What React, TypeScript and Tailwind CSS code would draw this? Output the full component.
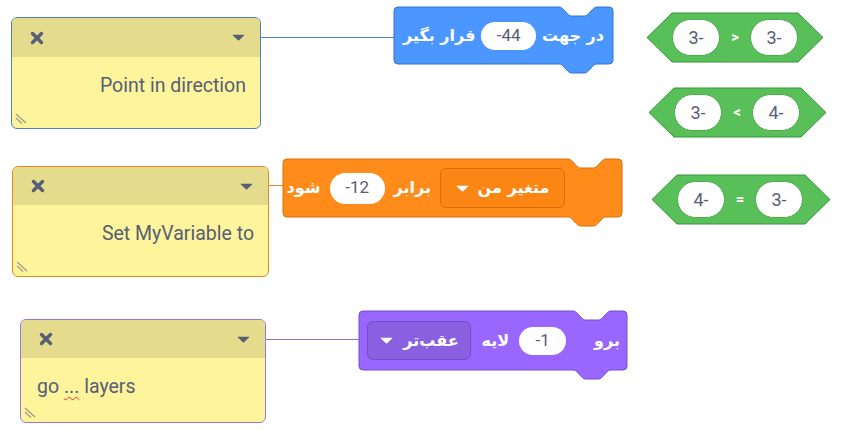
import React from 'react'

const TEXT = 'text-[#575e75]'
const FA = "font-['DejaVu_Sans',sans-serif]"
const RB = "font-['Roboto',sans-serif]"

function notch(sx: number, sy: number, dir: number) {
  const p = (x: number, y: number) => `${(x * sx * dir).toFixed(2)},${(y * sy).toFixed(2)}`
  return (
    `c ${p(2, 0)} ${p(3, 1)} ${p(4, 2)} l ${p(4, 4)} c ${p(1, 1)} ${p(2, 2)} ${p(4, 2)} ` +
    `h ${(12 * sx * dir).toFixed(2)} c ${p(2, 0)} ${p(3, -1)} ${p(4, -2)} l ${p(4, -4)} c ${p(1, -1)} ${p(2, -2)} ${p(4, -2)}`
  )
}

function blockPath(w: number, h: number, fromRight: number) {
  const nw = 38
  const depth = 9
  const sx = nw / 36
  const sy = depth / 8
  const ns = w - fromRight - nw
  const ne = w - fromRight
  return (
    `M 0,4 A 4,4 0 0 1 4,0 H ${ns} ${notch(sx, sy, 1)} H ${w - 4} A 4,4 0 0 1 ${w},4 ` +
    `V ${h - 4} A 4,4 0 0 1 ${w - 4},${h} H ${ne} ${notch(sx, sy, -1)} H 4 A 4,4 0 0 1 0,${h - 4} Z`
  )
}

function BlockShape({ w, h, fill, stroke }: { w: number; h: number; fill: string; stroke: string }) {
  return (
    <svg className="absolute left-0 top-0 overflow-visible" width={w} height={h + 10}>
      <path d={blockPath(w, h, 16)} fill={fill} stroke={stroke} strokeWidth={1} />
    </svg>
  )
}

function Oval({ value, className = '' }: { value: string; className?: string }) {
  return (
    <div
      dir="ltr"
      className={`flex items-center justify-center rounded-full bg-white text-[17px] [unicode-bidi:isolate] ${RB} ${TEXT} ${className}`}
    >
      {value}
    </div>
  )
}

function Caret({ color = '#575e75', w = 13, h = 7 }: { color?: string; w?: number; h?: number }) {
  return (
    <svg width={w} height={h} viewBox="0 0 13 7">
      <path d="M1 0.8 H12 Q12.6 0.8 12.1 1.4 L7.1 6.2 Q6.5 6.8 5.9 6.2 L0.9 1.4 Q0.4 0.8 1 0.8 Z" fill={color} />
    </svg>
  )
}

function CloseX() {
  return (
    <svg width="14" height="14" viewBox="0 0 14 14">
      <path d="M2.5 2.5 L11.5 11.5 M11.5 2.5 L2.5 11.5" stroke="#575e75" strokeWidth="3.4" strokeLinecap="round" />
    </svg>
  )
}

function Note({
  pos,
  border,
  headerH,
  children,
  align,
}: {
  pos: string
  border: string
  headerH: string
  children: React.ReactNode
  align: 'left' | 'right'
}) {
  return (
    <div className={`absolute flex flex-col overflow-hidden rounded-[6px] border bg-[#fef49c] ${pos} ${border}`}>
      <div className={`flex shrink-0 items-center justify-between bg-[#e4db8c] pl-[18px] pr-[15px] ${headerH}`}>
        <CloseX />
        <Caret />
      </div>
      <div
        className={`relative flex-1 pt-[17px] text-[19.5px] leading-[24px] ${RB} ${TEXT} ${
          align === 'right' ? 'pr-[14px] text-right' : 'pl-[16px] text-left'
        }`}
      >
        {children}
        <svg className="absolute bottom-[3px] left-[3px]" width="14" height="12" viewBox="0 0 14 12">
          <path d="M1 1 L11 10 M1 5 L7 10.5" stroke="#9a9a8a" strokeWidth="1.2" />
        </svg>
      </div>
    </div>
  )
}

function Hex({ pos, w, left, op, right }: { pos: string; w: number; left: string; op: string; right: string }) {
  const h = 49
  const d = 25
  return (
    <div className={`absolute h-[49px] ${pos}`} style={{ width: w }}>
      <svg className="absolute left-0 top-0 overflow-visible" width={w} height={h}>
        <polygon
          points={`0,${h / 2} ${d},0 ${w - d},0 ${w},${h / 2} ${w - d},${h} ${d},${h}`}
          fill="#59c059"
          stroke="#389438"
          strokeWidth={1}
          strokeLinejoin="round"
        />
      </svg>
      <div dir="ltr" className="relative flex h-full items-center pl-[25px]">
        <Oval value={left} className="h-[37px] w-[48px] border border-[#4ea94e] text-[18px]" />
        <div className={`w-[30px] text-center text-[15px] font-bold text-white ${RB}`}>{op}</div>
        <Oval value={right} className="h-[37px] w-[48px] border border-[#4ea94e] text-[18px]" />
      </div>
    </div>
  )
}

function Label({ children }: { children: React.ReactNode }) {
  return <span className={`whitespace-nowrap text-[16px] font-bold text-white ${FA}`}>{children}</span>
}

export default function App() {
  return (
    <div className="relative h-[430px] w-[844px] overflow-hidden bg-white">
      {/* connector lines */}
      <div className="absolute left-[260px] top-[37px] h-px w-[135px] bg-[#4c7fc4]" />
      <div className="absolute left-[268px] top-[185px] h-px w-[16px] bg-[#e08a24]" />
      <div className="absolute left-[265px] top-[339px] h-px w-[95px] bg-[#8f6fd6]" />

      <Note
        pos="left-[11px] top-[17px] h-[112px] w-[250px]"
        border="border-[#4c7fc4]"
        headerH="h-[39px]"
        align="right"
      >
        Point in direction
      </Note>

      <Note
        pos="left-[12px] top-[166px] h-[111px] w-[257px]"
        border="border-[#e08a24]"
        headerH="h-[38px]"
        align="right"
      >
        Set MyVariable to
      </Note>

      <Note
        pos="left-[20px] top-[319px] h-[104px] w-[246px]"
        border="border-[#9a76d6]"
        headerH="h-[38px]"
        align="left"
      >
        go <span className="underline decoration-red-500 decoration-wavy decoration-1 underline-offset-[3px]">...</span>{' '}
        layers
      </Note>

      {/* motion: point in direction */}
      <div className="absolute left-[394px] top-[7px] h-[57px] w-[219px]">
        <BlockShape w={219} h={57} fill="#4c97ff" stroke="#3373cc" />
        <div dir="rtl" className="relative flex h-full items-center justify-between px-[9px]">
          <Label>در جهت</Label>
          <Oval value="-44" className="h-[28px] w-[55px]" />
          <Label>قرار بگیر</Label>
        </div>
      </div>

      {/* variables: set to */}
      <div className="absolute left-[283px] top-[159px] h-[58px] w-[339px]">
        <BlockShape w={339} h={58} fill="#ff8c1a" stroke="#db6e00" />
        <div dir="rtl" className="relative flex h-full items-center gap-[9px] pr-[57px]">
          <div className="flex h-[40px] w-[125px] items-center justify-center gap-[9px] rounded-[6px] border border-[#db6e00] bg-[#fb8614]">
            <Label>متغیر من</Label>
            <Caret color="#ffffff" />
          </div>
          <Label>برابر</Label>
          <Oval value="-12" className="h-[31px] w-[55px]" />
          <Label>شود</Label>
        </div>
      </div>

      {/* looks: go back layers */}
      <div className="absolute left-[359px] top-[311px] h-[59px] w-[268px]">
        <BlockShape w={268} h={59} fill="#9966ff" stroke="#774dcb" />
        <div dir="rtl" className="relative flex h-full items-center gap-[10px] pr-[7px]">
          <Label>برو</Label>
          <Oval value="-1" className="mr-[18px] h-[28px] w-[47px]" />
          <Label>لایه</Label>
          <div className="flex h-[39px] w-[104px] items-center justify-center gap-[10px] rounded-[6px] border border-[#774dcb] bg-[#8a5fe0]">
            <Label>عقب‌تر</Label>
            <Caret color="#ffffff" />
          </div>
        </div>
      </div>

      {/* operators */}
      <Hex pos="left-[647px] top-[13px]" w={176} left="3-" op=">" right="3-" />
      <Hex pos="left-[649px] top-[88px]" w={177} left="3-" op="<" right="4-" />
      <Hex pos="left-[652px] top-[175px]" w={178} left="4-" op="=" right="3-" />
    </div>
  )
}
